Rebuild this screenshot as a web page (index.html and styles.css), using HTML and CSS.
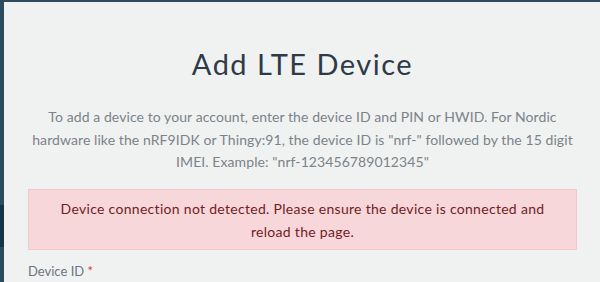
FILE: index.html
```html
<!DOCTYPE html>
<html lang="en">
<head>
    <meta charset="UTF-8">
    <meta name="viewport" content="width=device-width, initial-scale=1.0">
    <title>Add LTE Device</title>
    <link rel="stylesheet" href="styles.css">
</head>
<body>
    <div class="page">
        <div class="sidebar">
            <div class="nav-item active"></div>
        </div>
        <div class="modal">
            <h2 class="modal-title">Add LTE Device</h2>
            <p class="intro">To add a device to your account, enter the device ID and PIN or HWID. For Nordic hardware like the nRF9IDK or Thingy:91, the device ID is "nrf-" followed by the 15 digit IMEI. Example: "nrf-123456789012345"</p>
            <div class="alert">Device connection not detected. Please ensure the device is connected and reload the page.</div>
            <label class="field-label">Device ID <span class="required">*</span></label>
        </div>
    </div>
</body>
</html>
```

FILE: styles.css
```css
body {
    margin: 0;
    background-color: #2d4b5a;
    font-family: 'Lato', 'Open Sans', sans-serif;
    overflow: hidden;
}
.page {
    display: flex;
    width: 600px;
    height: 282px;
}
.sidebar {
    width: 4px;
    flex-shrink: 0;
}
.nav-item.active {
    margin-top: 205px;
    height: 42px;
    background-color: #163445;
}
.modal {
    flex-shrink: 0;
    width: 597px;
    margin-top: 2px;
    padding: 0 24px;
    box-sizing: border-box;
    background-color: #f0f2f2;
}
.modal-title {
    margin: 44px 0 0;
    text-align: center;
    font-size: 29px;
    font-weight: 400;
    letter-spacing: 1.5px;
    color: #2e3a45;
    line-height: 36px;
}
.intro {
    margin: 24px -2px 0;
    text-align: center;
    font-size: 14px;
    line-height: 22.5px;
    letter-spacing: 0.08px;
    color: #7b8388;
}
.alert {
    margin-top: 15px;
    padding: 7px 16px 6px;
    background-color: #f8d7da;
    border: 1px solid #f5c6cb;
    color: #721c24;
    text-align: center;
    font-size: 14px;
    line-height: 23px;
    letter-spacing: 0.3px;
}
.field-label {
    display: block;
    margin-top: 13px;
    font-size: 13px;
    color: #6c757d;
}
.required {
    color: #e3342f;
}
```
